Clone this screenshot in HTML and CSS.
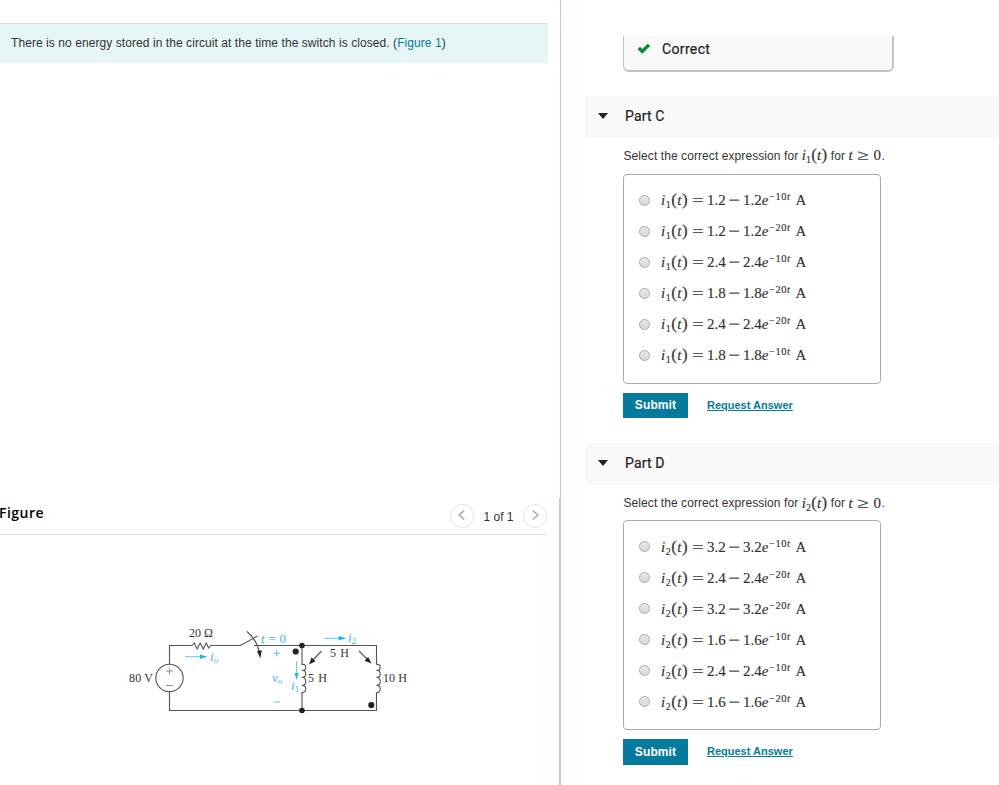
FILE: index.html
```html
<!DOCTYPE html>
<html lang="en">
<head>
  <meta charset="UTF-8">
  <meta name="viewport" content="width=device-width, initial-scale=1.0">
  <title>Circuit Problem</title>
  <link rel="stylesheet" href="styles.css">
</head>
<body>
  <div class="page">
    <div class="left">
      <div class="top-pane">
        <p class="intro">There is no energy stored in the circuit at the time the switch is closed. (<a href="#figure">Figure 1</a>)</p>
      </div>
      <div class="figure-pane" id="figure">
        <div class="figure-header">
          <h2>Figure</h2>
          <div class="pager">
            <button class="round" aria-label="Previous">
              <svg width="22" height="22" viewBox="0 0 22 22"><path d="M13.2 5.300 L8.2 10 L13.2 14.700"/></svg>
            </button>
            <span>1 of 1</span>
            <button class="round" aria-label="Next">
              <svg width="22" height="22" viewBox="0 0 22 22"><path d="M8.8 5.300 L13.8 10 L8.8 14.700"/></svg>
            </button>
          </div>
        </div>
        <svg class="circuit" width="300" height="110" viewBox="120 615 300 110">
          <!-- wires -->
          <g class="wire">
            <path d="M169.5 664 V645.5 H192 l2.2 -2.5 l3 6 l3 -6 l3 6 l3 -6 l2.5 5 l2 -2.5 H240.500 L257.500 636"/>
            <path d="M254 645.500 H376.500 V664.500"/>
            <path d="M169.500 692 V710.500 H376.500 V692.500"/>
            <path d="M302 645.500 V664.500 c5 -1 5 6 0 6 c5 -1 5 7 0 7 c5 -1 5 8 0 8 c5 -1 5 8 0 7 V710.500"/>
            <path d="M376.500 664.500 c5 -1 5 6 0 6 c5 -1 5 7 0 7 c5 -1 5 8 0 8 c5 -1 5 8 0 7"/>
            <circle cx="169.500" cy="678" r="13.700"/>
            <path d="M247 631.500 Q257 640 259.500 653"/>
            <path d="M321.500 651 L312 661 M359 651 L368 660"/>
          </g>
          <path class="sign" d="M166 671 h7 M169.500 667.500 v7 M166 685.500 h7"/>
          <g class="dot">
            <circle cx="302" cy="645.500" r="2.800"/>
            <circle cx="302" cy="710.500" r="2.800"/>
            <circle cx="295.700" cy="651.500" r="3.100"/>
            <circle cx="371.300" cy="705" r="3.100"/>
            <path d="M260.300 658.500 L257 651 L261.800 650.300 Z"/>
            <path d="M309 664.500 L311.500 657.600 L315.500 661.300 Z"/>
            <path d="M371.500 663.500 L364.500 660.800 L368.200 657 Z"/>
          </g>
          <!-- current directions -->
          <g class="flow">
            <path d="M185 656.700 H201 M324 638.300 H340 M296.600 661 V674 M273.500 653.200 h6.500 M276.700 650 v6.500 M273.500 702 h6.500"/>
            <path class="tip" d="M200 654.400 L207.500 656.700 L200 659 Z M338.500 636 L346.500 638.300 L338.500 640.600 Z M294.500 673 L296.600 680 L298.700 673 Z"/>
          </g>
          <g class="label">
            <text x="189" y="637" textLength="24">20 Ω</text>
            <text x="129" y="682" textLength="24">80 V</text>
            <text x="330" y="657" textLength="19">5 H</text>
            <text x="308" y="682" textLength="19">5 H</text>
            <text x="383" y="682" textLength="24">10 H</text>
          </g>
          <g class="label blue">
            <text x="261" y="643" textLength="25"><tspan class="it">t</tspan> = 0</text>
            <text x="210" y="661"><tspan class="it">i</tspan><tspan class="it sub" dy="2">o</tspan></text>
            <text x="348" y="642"><tspan class="it">i</tspan><tspan class="sub" dy="2">2</tspan></text>
            <text x="272" y="682"><tspan class="it">v</tspan><tspan class="it sub" dy="2">o</tspan></text>
            <text x="291" y="690"><tspan class="it">i</tspan><tspan class="sub" dy="2">1</tspan></text>
          </g>
        </svg>
      </div>
    </div>

    <div class="right">
      <div class="correct">
        <svg width="14" height="12" viewBox="0 0 14 12"><path d="M0.500 6.200 L3 3.700 L5.300 6 L10.800 0.800 L13.200 3 L5.300 10.800 Z"/></svg>
        <span>Correct</span>
      </div>

      <div class="part">
        <div class="part-header"><span class="arrow"></span><h3>Part C</h3></div>
        <div class="part-body">
          <p class="question">Select the correct expression for <span class="math fn"><i>i</i><sub>1</sub><b>(</b><i>t</i><b>)</b></span> for <span class="math cond"><i>t</i><span class="wide">≥</span><span>0</span></span>.</p>
          <div class="options">
            <label class="option"><input type="radio" name="c"><span class="math fn"><i>i</i><sub>1</sub><b>(</b><i>t</i><b>)</b></span><span class="math wide">=</span><span class="math">1.2</span><span class="math wide">−</span><span class="math">1.2<i>e</i></span><span class="math exp">−10<i>t</i></span><span class="math">A</span></label>
            <label class="option"><input type="radio" name="c"><span class="math fn"><i>i</i><sub>1</sub><b>(</b><i>t</i><b>)</b></span><span class="math wide">=</span><span class="math">1.2</span><span class="math wide">−</span><span class="math">1.2<i>e</i></span><span class="math exp">−20<i>t</i></span><span class="math">A</span></label>
            <label class="option"><input type="radio" name="c"><span class="math fn"><i>i</i><sub>1</sub><b>(</b><i>t</i><b>)</b></span><span class="math wide">=</span><span class="math">2.4</span><span class="math wide">−</span><span class="math">2.4<i>e</i></span><span class="math exp">−10<i>t</i></span><span class="math">A</span></label>
            <label class="option"><input type="radio" name="c"><span class="math fn"><i>i</i><sub>1</sub><b>(</b><i>t</i><b>)</b></span><span class="math wide">=</span><span class="math">1.8</span><span class="math wide">−</span><span class="math">1.8<i>e</i></span><span class="math exp">−20<i>t</i></span><span class="math">A</span></label>
            <label class="option"><input type="radio" name="c"><span class="math fn"><i>i</i><sub>1</sub><b>(</b><i>t</i><b>)</b></span><span class="math wide">=</span><span class="math">2.4</span><span class="math wide">−</span><span class="math">2.4<i>e</i></span><span class="math exp">−20<i>t</i></span><span class="math">A</span></label>
            <label class="option"><input type="radio" name="c"><span class="math fn"><i>i</i><sub>1</sub><b>(</b><i>t</i><b>)</b></span><span class="math wide">=</span><span class="math">1.8</span><span class="math wide">−</span><span class="math">1.8<i>e</i></span><span class="math exp">−10<i>t</i></span><span class="math">A</span></label>
          </div>
          <div class="actions">
            <button class="submit">Submit</button>
            <a href="#">Request Answer</a>
          </div>
        </div>
      </div>

      <div class="part part-d">
        <div class="part-header"><span class="arrow"></span><h3>Part D</h3></div>
        <div class="part-body">
          <p class="question">Select the correct expression for <span class="math fn"><i>i</i><sub>2</sub><b>(</b><i>t</i><b>)</b></span> for <span class="math cond"><i>t</i><span class="wide">≥</span><span>0</span></span>.</p>
          <div class="options">
            <label class="option"><input type="radio" name="d"><span class="math fn"><i>i</i><sub>2</sub><b>(</b><i>t</i><b>)</b></span><span class="math wide">=</span><span class="math">3.2</span><span class="math wide">−</span><span class="math">3.2<i>e</i></span><span class="math exp">−10<i>t</i></span><span class="math">A</span></label>
            <label class="option"><input type="radio" name="d"><span class="math fn"><i>i</i><sub>2</sub><b>(</b><i>t</i><b>)</b></span><span class="math wide">=</span><span class="math">2.4</span><span class="math wide">−</span><span class="math">2.4<i>e</i></span><span class="math exp">−20<i>t</i></span><span class="math">A</span></label>
            <label class="option"><input type="radio" name="d"><span class="math fn"><i>i</i><sub>2</sub><b>(</b><i>t</i><b>)</b></span><span class="math wide">=</span><span class="math">3.2</span><span class="math wide">−</span><span class="math">3.2<i>e</i></span><span class="math exp">−20<i>t</i></span><span class="math">A</span></label>
            <label class="option"><input type="radio" name="d"><span class="math fn"><i>i</i><sub>2</sub><b>(</b><i>t</i><b>)</b></span><span class="math wide">=</span><span class="math">1.6</span><span class="math wide">−</span><span class="math">1.6<i>e</i></span><span class="math exp">−10<i>t</i></span><span class="math">A</span></label>
            <label class="option"><input type="radio" name="d"><span class="math fn"><i>i</i><sub>2</sub><b>(</b><i>t</i><b>)</b></span><span class="math wide">=</span><span class="math">2.4</span><span class="math wide">−</span><span class="math">2.4<i>e</i></span><span class="math exp">−10<i>t</i></span><span class="math">A</span></label>
            <label class="option"><input type="radio" name="d"><span class="math fn"><i>i</i><sub>2</sub><b>(</b><i>t</i><b>)</b></span><span class="math wide">=</span><span class="math">1.6</span><span class="math wide">−</span><span class="math">1.6<i>e</i></span><span class="math exp">−20<i>t</i></span><span class="math">A</span></label>
          </div>
          <div class="actions">
            <button class="submit">Submit</button>
            <a href="#">Request Answer</a>
          </div>
        </div>
      </div>
    </div>
  </div>
</body>
</html>
```
FILE: styles.css
```css
* {
  box-sizing: border-box;
  margin: 0;
  padding: 0;
}

body {
  font-family: "Liberation Sans", Arial, sans-serif;
  font-size: 12px;
  color: #333;
  background: #fff;
  overflow: hidden;
}

a {
  color: #047a9c;
}

.page {
  display: flex;
  height: 785px;
}

/* Left side */
.left {
  width: 561px;
  display: flex;
  flex-direction: column;
}

.top-pane {
  height: 498px;
  padding: 23px 12px 0 0;
  border-right: 1px solid #b9cbdc;
}

.intro {
  height: 40px;
  padding-left: 11px;
  line-height: 39px;
  letter-spacing: 0.07px;
  background: #e6f6f6;
  border-top: 1px solid #d8dfdf;
}

.intro a {
  text-decoration: none;
}

.figure-pane {
  flex: 1;
  padding-right: 12px;
  border-right: 2px solid #b9cbdc;
}

.figure-header {
  display: flex;
  justify-content: space-between;
  height: 37px;
  border-bottom: 1px solid #ddd;
}

.figure-header h2 {
  margin-left: -1px;
  font-family: "Open Sans", sans-serif;
  font-size: 14px;
  font-weight: 600;
  line-height: 30px;
  letter-spacing: 0.5px;
  color: #000;
}

.pager {
  display: flex;
  gap: 9.5px;
  padding-top: 6px;
  line-height: 26px;
}

.round {
  width: 24px;
  height: 24px;
  border: 1px solid #e2e2e2;
  border-radius: 50%;
  background: #fff;
}

.round svg {
  display: block;
  fill: none;
  stroke: #b8b8b8;
  stroke-width: 1.8;
}

.circuit {
  display: block;
  margin: 80px 0 0 120px;
}

.wire {
  fill: none;
  stroke: #555;
  stroke-width: 1.1;
}

.sign {
  stroke: #777;
  stroke-width: 0.8;
}

.dot {
  fill: #222;
}

.flow {
  stroke: #35b8ee;
  stroke-width: 0.8;
}

.flow .tip {
  fill: #22b2ee;
  stroke: none;
}

.label {
  font-family: "Liberation Serif", serif;
  font-size: 12px;
  fill: #333;
}

.blue {
  font-size: 13px;
  fill: #35b8ee;
}

.it {
  font-style: italic;
}

.sub {
  font-size: 9px;
}

/* Right side */
.right {
  flex: 1;
  padding: 36px 0 0 24px;
}

.correct {
  display: flex;
  gap: 11px;
  width: 271px;
  height: 36px;
  margin-left: 38px;
  padding: 5px 0 0 13px;
  font-family: Roboto, sans-serif;
  font-size: 14px;
  font-weight: 400;
  line-height: 16px;
  letter-spacing: 0.35px;
  color: #222;
  -webkit-text-stroke: 0.2px #222;
  background: #f9f9f9;
  border: solid #c4c4c4;
  border-width: 0 2px 2px 1px;
  border-radius: 0 0 6px 6px;
}

.correct svg {
  margin-top: 2px;
  fill: #058a3c;
}

.part {
  height: 347px;
}

.correct + .part {
  margin-top: 24px;
}

.part-header {
  display: flex;
  align-items: center;
  height: 42px;
  padding: 0 0 2px 13px;
  background: #f9f9f9;
}

.arrow {
  width: 10px;
  margin-right: 17px;
  border: 5px solid transparent;
  border-top: 6px solid #222;
  border-bottom: 0;
}

.part-header h3 {
  font-family: Roboto, sans-serif;
  font-size: 14px;
  font-weight: 400;
  letter-spacing: 0.15px;
  color: #222;
  -webkit-text-stroke: 0.2px #222;
}

.part-body {
  padding-left: 38px;
}

.question {
  height: 36px;
  padding-left: 0.5px;
  line-height: 34px;
  letter-spacing: 0.08px;
  white-space: nowrap;
}

.part-d .question {
  height: 35px;
}

.math {
  font-family: "Liberation Serif", serif;
  font-size: 15px;
  white-space: nowrap;
  -webkit-text-stroke: 0.15px #333;
}

.math sub {
  font-size: 10px;
  line-height: 0;
  vertical-align: -3px;
}

.math b {
  font-size: 17px;
  font-weight: 400;
  line-height: 0;
}

.fn {
  letter-spacing: 0.5px;
}

.question .fn {
  letter-spacing: 0.2px;
}

/* stretched operators */
.wide {
  width: 9px;
  transform: scaleX(1.4);
  transform-origin: left;
}

.cond {
  display: inline-grid;
  grid-template-columns: 9px 16px 8px;
}

.options {
  width: 258px;
  height: 210px;
  padding: 10px 0 0 15px;
  border: 1px solid #aaa;
  border-radius: 4px;
}

.option {
  display: grid;
  grid-template-columns: 22px 30.5px 15.5px 21px 15px 26px 26.5px 10px;
  align-items: center;
  height: 31px;
}

.part-d .math {
  position: relative;
  top: 0.5px;
}

.option input {
  appearance: none;
  width: 11px;
  height: 11px;
  border: 1px solid #aaa;
  border-radius: 50%;
  background: linear-gradient(#e8e8e8, #d8d8d8);
}

.option .exp {
  font-size: 10.5px;
  letter-spacing: 0.5px;
  padding-bottom: 8px;
}

.actions {
  display: flex;
  gap: 19px;
  padding-top: 9px;
}

.submit {
  width: 65px;
  height: 25px;
  padding-bottom: 2px;
  border: none;
  background: #047a9c;
  color: #fff;
  font-family: "Liberation Sans", Arial, sans-serif;
  font-size: 12px;
  font-weight: bold;
  letter-spacing: 0.1px;
}

.part-d .submit {
  height: 26px;
  padding-bottom: 1px;
}

.actions a {
  font-size: 11px;
  font-weight: bold;
  line-height: 25px;
}
```
